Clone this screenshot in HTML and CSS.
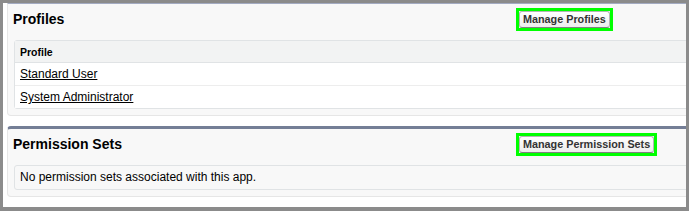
FILE: index.html
```html
<!DOCTYPE html>
<html lang="en">
<head>
    <meta charset="UTF-8">
    <meta name="viewport" content="width=device-width, initial-scale=1.0">
    <title>App Access</title>
    <link rel="stylesheet" href="styles.css">
</head>
<body>
    <div class="frame">
        <!-- Profiles -->
        <div class="block block-profiles">
            <div class="block-head">
                <h2 class="block-title">Profiles</h2>
                <span class="mark"><button type="button" class="btn">Manage Profiles</button></span>
            </div>
            <table class="list">
                <tr>
                    <th>Profile</th>
                </tr>
                <tr>
                    <td><a href="#">Standard User</a></td>
                </tr>
                <tr class="last">
                    <td><a href="#">System Administrator</a></td>
                </tr>
            </table>
        </div>

        <!-- Permission Sets -->
        <div class="block block-perms">
            <div class="block-head">
                <h2 class="block-title">Permission Sets</h2>
                <span class="mark"><button type="button" class="btn">Manage Permission Sets</button></span>
            </div>
            <div class="empty">No permission sets associated with this app.</div>
        </div>
    </div>
</body>
</html>
```

FILE: styles.css
```css
body {
    margin: 0;
    font-family: "Liberation Sans", Arial, sans-serif;
    color: #000;
}

.frame {
    width: 689px;
    height: 211px;
    box-sizing: border-box;
    border: 3px solid #8b8b8b;
    border-bottom-width: 4px;
    padding-left: 4px;
    background: #fff;
    overflow: hidden;
}

.block {
    margin-right: -40px;
    background: #f8f8f8;
    border: 1px solid #e6e6e6;
    border-radius: 0 0 4px 4px;
    padding-bottom: 6px;
}

.block-profiles {
    border-top: 1px solid #a3abc2;
}

.block-perms {
    margin-top: 10px;
    border-top: 3px solid #747e96;
    border-radius: 4px;
}

.block-head {
    display: flex;
    align-items: center;
    height: 30px;
    padding-left: 5px;
}

.block-title {
    flex: 0 0 503px;
    margin: 0;
    font-size: 14px;
    font-weight: bold;
}

/* green highlight box around the buttons */
.mark {
    display: inline-flex;
    border: 3px solid #00ff00;
}

.btn {
    font-family: "Liberation Sans", Arial, sans-serif;
    font-size: 10.8px;
    font-weight: bold;
    line-height: 11px;
    color: #333;
    margin: 0;
    padding: 2px 3px;
    border: 1px solid #b5b5b5;
    border-bottom-color: #7f7f7f;
    border-radius: 3px;
    background: linear-gradient(#ffffff, #ededed);
}

.list {
    margin: 6px 0 0 6px;
    width: 700px;
    border: 1px solid #e0e3e5;
    border-spacing: 0;
    border-radius: 3px;
}

.list th {
    height: 21px;
    padding: 0 5px;
    text-align: left;
    font-size: 10.5px;
    background: #f2f3f3;
    border-bottom: 1px solid #e0e3e5;
}

.list td {
    height: 22px;
    padding: 0 5px;
    font-size: 12px;
    background: #fff;
    border-bottom: 1px solid #ededed;
}

.list .last td {
    border-bottom: none;
}

.list a {
    color: #000;
    text-decoration: underline;
}

.empty {
    margin: 6px 0 0 6px;
    height: 23px;
    line-height: 23px;
    padding-left: 5px;
    font-size: 12px;
    border: 1px solid #e0e3e5;
    border-radius: 3px;
}
```
